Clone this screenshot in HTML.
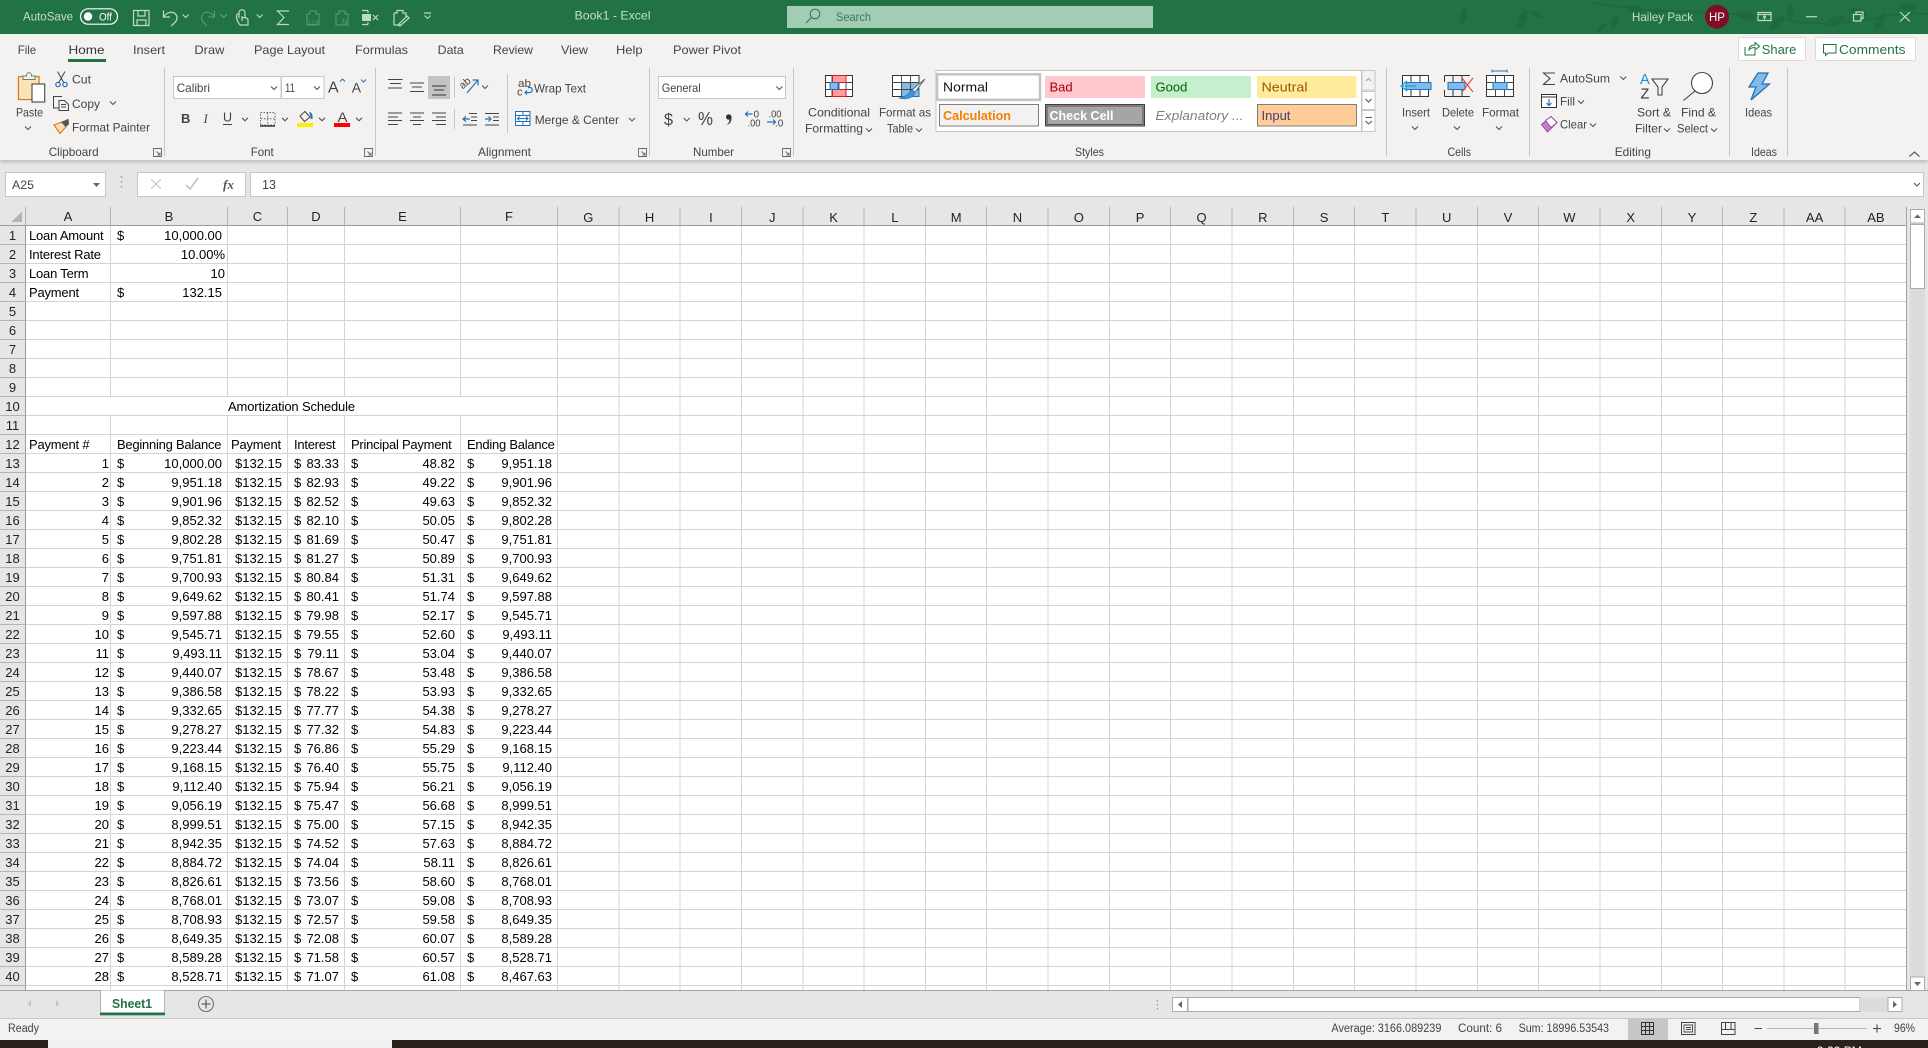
<!DOCTYPE html>
<html lang="en"><head><meta charset="utf-8"><title>Book1 - Excel</title>
<style>
html,body{margin:0;padding:0;width:1928px;height:1048px;overflow:hidden;background:#e6e6e6;font-family:"Liberation Sans",sans-serif}
.abs{position:absolute}
#grid{left:0;top:207px;width:1906px;height:783px;overflow:hidden;background:#fff}
#bgr{left:558px;top:0;width:1348px;height:783px;
background:repeating-linear-gradient(to right,transparent 0,transparent 60.32px,#d4d4d4 60.32px,#d4d4d4 61.32px),repeating-linear-gradient(to bottom,transparent 0,transparent 18px,#d4d4d4 18px,#d4d4d4 19px);background-position:0 0,0 0}
#hdr{left:558px;top:0;width:1348px;height:19px;box-sizing:border-box;background:repeating-linear-gradient(to right,#e6e6e6 0,#e6e6e6 60.32px,#b4b4b4 60.32px,#b4b4b4 61.32px);border-bottom:1px solid #9c9c9c}
table{position:absolute;left:0;top:0;border-collapse:separate;border-spacing:0;table-layout:fixed;width:558px;font-size:13px;color:#000}
th,td{box-sizing:border-box;height:19px;padding:2px 0 0 0;border-right:1px solid #d4d4d4;border-bottom:1px solid #d4d4d4;line-height:16px;white-space:nowrap;overflow:hidden;font-weight:normal}
thead th{background:#e6e6e6;border-right:1px solid #b4b4b4;border-bottom:1px solid #9c9c9c;color:#222;text-align:center}
tbody th{background:#e6e6e6;border-right:1px solid #9c9c9c;border-bottom:1px solid #b4b4b4;text-align:center;color:#222}
td.a{padding:2px 5px 0 6px;text-align:right}
td.a i{float:left;font-style:normal}
td.n{text-align:right;padding-right:1px}
td.r{text-align:right;padding-right:2px}
td.c{text-align:right;padding-right:5px}
td.l{padding-left:3px;letter-spacing:-.2px}
td.h{padding-left:6px;letter-spacing:-.25px}
td.m{text-align:center;letter-spacing:-.15px}
#ov{position:absolute;left:0;top:0}
#ov text{font-family:"Liberation Sans",sans-serif;font-size:12px;fill:#444}
#ov .tb{fill:#c6dccf}
#ov .nm{font-size:13px}
.ic{fill:none;stroke:#444;stroke-width:1}
.w{fill:none;stroke:#c0d8ca;stroke-width:1.2}
.d{fill:none;stroke:#5c9a78;stroke-width:1}
.bl{fill:none;stroke:#1e73be;stroke-width:1.2}
</style></head><body>
<div class="abs" style="left:0;top:0;width:1928px;height:34px;background:#217346"></div>
<div class="abs" style="left:787px;top:6px;width:366px;height:22px;background:#a2cdb4"></div>
<div class="abs" style="left:0;top:34px;width:1928px;height:126px;background:#f3f2f1;box-shadow:0 2px 3px rgba(0,0,0,.18)"></div>
<div class="abs" style="left:5px;top:172px;width:101px;height:25px;box-sizing:border-box;background:#fff;border:1px solid #c6c6c6"></div>
<div class="abs" style="left:137px;top:172px;width:109px;height:25px;box-sizing:border-box;background:#fff;border:1px solid #c6c6c6"></div>
<div class="abs" style="left:250px;top:172px;width:1674px;height:25px;box-sizing:border-box;background:#fff;border:1px solid #c6c6c6"></div>

<div class="abs" id="grid">
<div class="abs" id="bgr"></div><div class="abs" id="hdr"></div>
<table>
<colgroup><col style="width:26px"><col style="width:85px"><col style="width:117px"><col style="width:60px"><col style="width:57px"><col style="width:116px"><col style="width:97px"></colgroup>
<thead><tr><th></th><th>A</th><th>B</th><th>C</th><th>D</th><th>E</th><th>F</th></tr></thead>
<tbody>
<tr><th>1</th><td class="l">Loan Amount</td><td class="a"><i>$</i>10,000.00</td><td></td><td></td><td></td><td></td></tr>
<tr><th>2</th><td class="l">Interest Rate</td><td class="r">10.00%</td><td></td><td></td><td></td><td></td></tr>
<tr><th>3</th><td class="l">Loan Term</td><td class="r">10</td><td></td><td></td><td></td><td></td></tr>
<tr><th>4</th><td class="l">Payment</td><td class="a"><i>$</i>132.15</td><td></td><td></td><td></td><td></td></tr>
<tr><th>5</th><td></td><td></td><td></td><td></td><td></td><td></td></tr>
<tr><th>6</th><td></td><td></td><td></td><td></td><td></td><td></td></tr>
<tr><th>7</th><td></td><td></td><td></td><td></td><td></td><td></td></tr>
<tr><th>8</th><td></td><td></td><td></td><td></td><td></td><td></td></tr>
<tr><th>9</th><td></td><td></td><td></td><td></td><td></td><td></td></tr>
<tr><th>10</th><td class="m" colspan="6">Amortization Schedule</td></tr>
<tr><th>11</th><td></td><td></td><td></td><td></td><td></td><td></td></tr>
<tr><th>12</th><td class="l">Payment #</td><td class="h">Beginning Balance</td><td class="l">Payment</td><td class="h">Interest</td><td class="h">Principal Payment</td><td class="h">Ending Balance</td></tr>
<tr><th>13</th><td class="n">1</td><td class="a"><i>$</i>10,000.00</td><td class="c">$132.15</td><td class="a"><i>$</i>83.33</td><td class="a"><i>$</i>48.82</td><td class="a"><i>$</i>9,951.18</td></tr>
<tr><th>14</th><td class="n">2</td><td class="a"><i>$</i>9,951.18</td><td class="c">$132.15</td><td class="a"><i>$</i>82.93</td><td class="a"><i>$</i>49.22</td><td class="a"><i>$</i>9,901.96</td></tr>
<tr><th>15</th><td class="n">3</td><td class="a"><i>$</i>9,901.96</td><td class="c">$132.15</td><td class="a"><i>$</i>82.52</td><td class="a"><i>$</i>49.63</td><td class="a"><i>$</i>9,852.32</td></tr>
<tr><th>16</th><td class="n">4</td><td class="a"><i>$</i>9,852.32</td><td class="c">$132.15</td><td class="a"><i>$</i>82.10</td><td class="a"><i>$</i>50.05</td><td class="a"><i>$</i>9,802.28</td></tr>
<tr><th>17</th><td class="n">5</td><td class="a"><i>$</i>9,802.28</td><td class="c">$132.15</td><td class="a"><i>$</i>81.69</td><td class="a"><i>$</i>50.47</td><td class="a"><i>$</i>9,751.81</td></tr>
<tr><th>18</th><td class="n">6</td><td class="a"><i>$</i>9,751.81</td><td class="c">$132.15</td><td class="a"><i>$</i>81.27</td><td class="a"><i>$</i>50.89</td><td class="a"><i>$</i>9,700.93</td></tr>
<tr><th>19</th><td class="n">7</td><td class="a"><i>$</i>9,700.93</td><td class="c">$132.15</td><td class="a"><i>$</i>80.84</td><td class="a"><i>$</i>51.31</td><td class="a"><i>$</i>9,649.62</td></tr>
<tr><th>20</th><td class="n">8</td><td class="a"><i>$</i>9,649.62</td><td class="c">$132.15</td><td class="a"><i>$</i>80.41</td><td class="a"><i>$</i>51.74</td><td class="a"><i>$</i>9,597.88</td></tr>
<tr><th>21</th><td class="n">9</td><td class="a"><i>$</i>9,597.88</td><td class="c">$132.15</td><td class="a"><i>$</i>79.98</td><td class="a"><i>$</i>52.17</td><td class="a"><i>$</i>9,545.71</td></tr>
<tr><th>22</th><td class="n">10</td><td class="a"><i>$</i>9,545.71</td><td class="c">$132.15</td><td class="a"><i>$</i>79.55</td><td class="a"><i>$</i>52.60</td><td class="a"><i>$</i>9,493.11</td></tr>
<tr><th>23</th><td class="n">11</td><td class="a"><i>$</i>9,493.11</td><td class="c">$132.15</td><td class="a"><i>$</i>79.11</td><td class="a"><i>$</i>53.04</td><td class="a"><i>$</i>9,440.07</td></tr>
<tr><th>24</th><td class="n">12</td><td class="a"><i>$</i>9,440.07</td><td class="c">$132.15</td><td class="a"><i>$</i>78.67</td><td class="a"><i>$</i>53.48</td><td class="a"><i>$</i>9,386.58</td></tr>
<tr><th>25</th><td class="n">13</td><td class="a"><i>$</i>9,386.58</td><td class="c">$132.15</td><td class="a"><i>$</i>78.22</td><td class="a"><i>$</i>53.93</td><td class="a"><i>$</i>9,332.65</td></tr>
<tr><th>26</th><td class="n">14</td><td class="a"><i>$</i>9,332.65</td><td class="c">$132.15</td><td class="a"><i>$</i>77.77</td><td class="a"><i>$</i>54.38</td><td class="a"><i>$</i>9,278.27</td></tr>
<tr><th>27</th><td class="n">15</td><td class="a"><i>$</i>9,278.27</td><td class="c">$132.15</td><td class="a"><i>$</i>77.32</td><td class="a"><i>$</i>54.83</td><td class="a"><i>$</i>9,223.44</td></tr>
<tr><th>28</th><td class="n">16</td><td class="a"><i>$</i>9,223.44</td><td class="c">$132.15</td><td class="a"><i>$</i>76.86</td><td class="a"><i>$</i>55.29</td><td class="a"><i>$</i>9,168.15</td></tr>
<tr><th>29</th><td class="n">17</td><td class="a"><i>$</i>9,168.15</td><td class="c">$132.15</td><td class="a"><i>$</i>76.40</td><td class="a"><i>$</i>55.75</td><td class="a"><i>$</i>9,112.40</td></tr>
<tr><th>30</th><td class="n">18</td><td class="a"><i>$</i>9,112.40</td><td class="c">$132.15</td><td class="a"><i>$</i>75.94</td><td class="a"><i>$</i>56.21</td><td class="a"><i>$</i>9,056.19</td></tr>
<tr><th>31</th><td class="n">19</td><td class="a"><i>$</i>9,056.19</td><td class="c">$132.15</td><td class="a"><i>$</i>75.47</td><td class="a"><i>$</i>56.68</td><td class="a"><i>$</i>8,999.51</td></tr>
<tr><th>32</th><td class="n">20</td><td class="a"><i>$</i>8,999.51</td><td class="c">$132.15</td><td class="a"><i>$</i>75.00</td><td class="a"><i>$</i>57.15</td><td class="a"><i>$</i>8,942.35</td></tr>
<tr><th>33</th><td class="n">21</td><td class="a"><i>$</i>8,942.35</td><td class="c">$132.15</td><td class="a"><i>$</i>74.52</td><td class="a"><i>$</i>57.63</td><td class="a"><i>$</i>8,884.72</td></tr>
<tr><th>34</th><td class="n">22</td><td class="a"><i>$</i>8,884.72</td><td class="c">$132.15</td><td class="a"><i>$</i>74.04</td><td class="a"><i>$</i>58.11</td><td class="a"><i>$</i>8,826.61</td></tr>
<tr><th>35</th><td class="n">23</td><td class="a"><i>$</i>8,826.61</td><td class="c">$132.15</td><td class="a"><i>$</i>73.56</td><td class="a"><i>$</i>58.60</td><td class="a"><i>$</i>8,768.01</td></tr>
<tr><th>36</th><td class="n">24</td><td class="a"><i>$</i>8,768.01</td><td class="c">$132.15</td><td class="a"><i>$</i>73.07</td><td class="a"><i>$</i>59.08</td><td class="a"><i>$</i>8,708.93</td></tr>
<tr><th>37</th><td class="n">25</td><td class="a"><i>$</i>8,708.93</td><td class="c">$132.15</td><td class="a"><i>$</i>72.57</td><td class="a"><i>$</i>59.58</td><td class="a"><i>$</i>8,649.35</td></tr>
<tr><th>38</th><td class="n">26</td><td class="a"><i>$</i>8,649.35</td><td class="c">$132.15</td><td class="a"><i>$</i>72.08</td><td class="a"><i>$</i>60.07</td><td class="a"><i>$</i>8,589.28</td></tr>
<tr><th>39</th><td class="n">27</td><td class="a"><i>$</i>8,589.28</td><td class="c">$132.15</td><td class="a"><i>$</i>71.58</td><td class="a"><i>$</i>60.57</td><td class="a"><i>$</i>8,528.71</td></tr>
<tr><th>40</th><td class="n">28</td><td class="a"><i>$</i>8,528.71</td><td class="c">$132.15</td><td class="a"><i>$</i>71.07</td><td class="a"><i>$</i>61.08</td><td class="a"><i>$</i>8,467.63</td></tr>
<tr><th>41</th><td class="n">29</td><td class="a"><i>$</i>8,467.63</td><td class="c">$132.15</td><td class="a"><i>$</i>70.56</td><td class="a"><i>$</i>61.59</td><td class="a"><i>$</i>8,406.04</td></tr>
</tbody></table>
</div>
<div class="abs" style="left:0;top:990px;width:1928px;height:1px;background:#a4a4a4"></div>
<div class="abs" style="left:1906px;top:207px;width:1px;height:783px;background:#a4a4a4"></div>
<div class="abs" style="left:1910px;top:209px;width:15px;height:781px;background:#dcdcdc"></div>
<div class="abs" style="left:0;top:1018px;width:1928px;height:22px;background:#f3f2f1;border-top:1px solid #c8c6c4;box-sizing:border-box"></div>
<div class="abs" style="left:0;top:1040px;width:1928px;height:8px;background:#2b211b;overflow:hidden">
<div class="abs" style="left:48px;top:0;width:344px;height:8px;background:#f1f1f1"></div>
<div class="abs" style="left:1817px;top:4px;color:#fff;font-size:12px;line-height:14px">9:22 PM</div>
</div>

<svg id="ov" width="1928" height="1048" viewBox="0 0 1928 1048" xmlns="http://www.w3.org/2000/svg">
<defs>
<path id="cv" d="M-3 -1.5 L0 1.5 L3 -1.5" fill="none" stroke="#555" stroke-width="1.1"/>
<path id="cw" d="M-3 -1.5 L0 1.5 L3 -1.5" fill="none" stroke="#c0d8ca" stroke-width="1.1"/>
<path id="lc" d="M0 0 H8 V8 H0 Z M3 3 L6.5 6.5 M6.5 4 V6.5 H4" fill="none" stroke="#666" stroke-width=".9"/>
<path id="lf" d="M0 0 C6 -7 14 -7 20 -3 C14 3 6 4 0 0Z" fill="#1d6a3f"/>
</defs>

<!-- decorative leaves -->
<g>
<use href="#lf" transform="translate(1462,24) rotate(-70) scale(.9)"/>
<use href="#lf" transform="translate(1518,28) rotate(-55)"/>
<use href="#lf" transform="translate(1530,12) rotate(30) scale(.7)"/>
<use href="#lf" transform="translate(1596,32) rotate(-30) scale(.7)"/>
<use href="#lf" transform="translate(1612,30) rotate(-60) scale(.8)"/>
<use href="#lf" transform="translate(1625,6) rotate(25)"/>
<use href="#lf" transform="translate(1648,22) rotate(-40)"/>
<use href="#lf" transform="translate(1735,14) rotate(20)"/>
<use href="#lf" transform="translate(1770,30) rotate(-35)"/>
<use href="#lf" transform="translate(1790,20) rotate(-80) scale(.8)"/>
<use href="#lf" transform="translate(1825,26) rotate(-15) scale(1.1)"/>
<use href="#lf" transform="translate(1850,8) rotate(35)"/>
<use href="#lf" transform="translate(1875,30) rotate(-50)"/>
<use href="#lf" transform="translate(1898,6) rotate(15)"/>
<path d="M1590 2 C1650 16 1730 8 1800 22 C1850 30 1890 10 1928 14" fill="none" stroke="#1d6a3f" stroke-width="1.5"/>
</g>

<!-- title bar -->
<text class="tb" x="23" y="20.5" textLength="50" lengthAdjust="spacingAndGlyphs">AutoSave</text>
<rect x="80.5" y="8.8" width="37" height="15.4" rx="7.7" fill="none" stroke="#fff" stroke-width="1.2"/>
<circle cx="88" cy="16.5" r="4.2" fill="#fff"/>
<text x="99" y="20.5" textLength="13" lengthAdjust="spacingAndGlyphs" style="font-size:11px;fill:#fff">Off</text>
<path class="w" d="M133.5 10.5 H149 V25.5 H133.5Z M138 10.5 V16 H145 V10.5 M137 25.5 V20 H146 V25.5"/>
<path class="w" d="M163.5 10.5 V17 H170 M163.5 17 C168 10 177 11 177 18 C177 21 174 23.5 171 26"/>
<use href="#cw" x="185.7" y="16"/>
<path class="d" d="M214.5 10.5 V17 H208 M214.5 17 C210 10 201.5 11 201.5 18 C201.5 21 204.5 23.5 207 26"/>
<use href="#cw" x="223.7" y="16" opacity=".45"/>
<path class="w" d="M239 18 V12.5 C239 9 245 9 245 12.5 V18 M242 16 V21 M239 14 C235 13 236 20 240 25 H248 V20 C248 18 245 17.5 242 17.5"/>
<use href="#cw" x="259.7" y="16"/>
<path class="w" d="M289 11 H277.5 L284 17.5 L277.5 24.5 H289"/>
<path class="d" d="M307 14 H310 V11 H316 V14 H319 V25 H307Z"/>
<text x="307.5" y="24.5" style="font-size:6.5px;fill:#5c9a78">123</text>
<path class="d" d="M336 14 H339 V11 H345 V14 H348 V25 H336Z"/>
<text x="342" y="24.5" style="font-size:8px;font-style:italic;fill:#5c9a78">fx</text>
<path class="w" d="M362 10.5 H368 M362 24.5 H368 M368 10.5 V13 M368 22 V24.5"/><rect x="362" y="14" width="9" height="7" fill="#c0d8ca"/>
<path class="w" d="M373 15 L378 20 M378 15 L373 20"/>
<path class="w" d="M394 13 H397 V10.5 H403 V13 H406 V18 M401 25 H394 V13 M398 25 L407 16 L409 18 L400 26Z"/>
<path class="w" d="M424 13 H431"/><use href="#cw" x="427.5" y="17"/>
<text class="tb" x="574.5" y="19.5" textLength="76" lengthAdjust="spacingAndGlyphs">Book1  -  Excel</text>
<circle cx="815" cy="14" r="4.8" fill="none" stroke="#2f7d58" stroke-width="1.1"/><path d="M811.5 17.5 L806 23" stroke="#2f7d58" stroke-width="1.2"/>
<text x="836" y="21" textLength="35" lengthAdjust="spacingAndGlyphs" style="fill:#2f7d58">Search</text>
<text class="tb" x="1632" y="21" textLength="61" lengthAdjust="spacingAndGlyphs">Hailey Pack</text>
<circle cx="1717" cy="16.7" r="12" fill="#7f0d26"/>
<text x="1717" y="21" text-anchor="middle" style="font-size:11.5px;fill:#fff">HP</text>
<path class="w" d="M1758 12.5 H1771 V20.5 H1758Z M1758 14.5 H1771 M1764.5 19.5 V16 M1762.8 17.5 L1764.5 15.8 L1766.2 17.5"/>
<path class="w" d="M1806 16.7 H1817"/>
<path class="w" d="M1853.5 14.5 H1861 V21 H1853.5Z M1856 14.5 V12 H1863 V18.5 H1861"/>
<path class="w" d="M1900 12 L1910 21.5 M1910 12 L1900 21.5"/>

<!-- tabs -->
<text x="17.7" y="54" textLength="18.5" lengthAdjust="spacingAndGlyphs">File</text>
<text x="68.5" y="54" textLength="36" lengthAdjust="spacingAndGlyphs" style="fill:#333">Home</text>
<rect x="68" y="59" width="38" height="3" fill="#217346"/>
<text x="133" y="54" textLength="32" lengthAdjust="spacingAndGlyphs">Insert</text>
<text x="194.4" y="54" textLength="30" lengthAdjust="spacingAndGlyphs">Draw</text>
<text x="254" y="54" textLength="71" lengthAdjust="spacingAndGlyphs">Page Layout</text>
<text x="355" y="54" textLength="53" lengthAdjust="spacingAndGlyphs">Formulas</text>
<text x="437.7" y="54" textLength="26" lengthAdjust="spacingAndGlyphs">Data</text>
<text x="493" y="54" textLength="40" lengthAdjust="spacingAndGlyphs">Review</text>
<text x="561" y="54" textLength="27" lengthAdjust="spacingAndGlyphs">View</text>
<text x="616" y="54" textLength="26.5" lengthAdjust="spacingAndGlyphs">Help</text>
<text x="673" y="54" textLength="68" lengthAdjust="spacingAndGlyphs">Power Pivot</text>

<g fill="#fff" stroke="#dcdad8">
<rect x="1738.5" y="37.5" width="67" height="23" rx="2"/>
<rect x="1815.5" y="37.5" width="100" height="23" rx="2"/>
</g>
<path d="M1745 47 V55 H1755 V51 M1749 50 C1749 46 1752 45 1755 45 V42.5 L1759.5 46.5 L1755 50 V47.5 C1752 47.5 1750 48.5 1749 50Z" fill="none" stroke="#217346" stroke-width="1"/>
<text x="1761.8" y="54" textLength="34.5" lengthAdjust="spacingAndGlyphs" style="font-size:13px;fill:#217346">Share</text>
<path d="M1823.5 44.5 H1836 V53 H1828 L1825.5 55.5 V53 H1823.5Z" fill="none" stroke="#217346" stroke-width="1"/>
<text x="1839" y="54" textLength="66.5" lengthAdjust="spacingAndGlyphs" style="font-size:13px;fill:#217346">Comments</text>

<!-- separators -->
<g stroke="#c8c6c4" stroke-width="1">
<path d="M164.5 68 V156 M375.5 68 V156 M649.5 68 V156 M793.5 68 V156 M1386.5 68 V156 M1529.5 68 V156 M1729.5 68 V156 M1787.5 68 V156"/>
<path d="M454.5 77 V98 M454.5 109 V129 M507.5 74 V133"/>
</g>
<!-- group labels -->
<text x="48.7" y="156" textLength="50" lengthAdjust="spacingAndGlyphs">Clipboard</text>
<text x="250.7" y="156" textLength="23" lengthAdjust="spacingAndGlyphs">Font</text>
<text x="478" y="156" textLength="53" lengthAdjust="spacingAndGlyphs">Alignment</text>
<text x="693" y="156" textLength="41" lengthAdjust="spacingAndGlyphs">Number</text>
<text x="1075" y="156" textLength="29" lengthAdjust="spacingAndGlyphs">Styles</text>
<text x="1447.5" y="156" textLength="23.5" lengthAdjust="spacingAndGlyphs">Cells</text>
<text x="1614.7" y="156" textLength="36.3" lengthAdjust="spacingAndGlyphs">Editing</text>
<text x="1751" y="156" textLength="26" lengthAdjust="spacingAndGlyphs">Ideas</text>
<use href="#lc" x="153.5" y="148.5"/><use href="#lc" x="364.5" y="148.5"/><use href="#lc" x="638.5" y="148.5"/><use href="#lc" x="782.5" y="148.5"/>
<path d="M1909.5 156.5 L1914.5 152 L1919.5 156.5" fill="none" stroke="#444" stroke-width="1.1"/>

<!-- clipboard -->
<path d="M18.5 76.5 H39 V84 M18.5 76.5 V99.5 H32" fill="#fde9c8" stroke="#d97a10" stroke-width="1.3"/>
<rect x="20.5" y="78" width="17" height="19" fill="#fbe3b8"/>
<path d="M23 79.5 V76 H26.5 C26.5 71.5 31.5 71.5 31.5 76 H35 V79.5Z" fill="#f3f2f1" stroke="#777" stroke-width="1"/>
<rect x="32" y="84" width="12.7" height="18" fill="#fff" stroke="#444" stroke-width="1.1"/>
<text x="16" y="116.7" textLength="27" lengthAdjust="spacingAndGlyphs">Paste</text>
<use href="#cv" x="28" y="128"/>
<path d="M57.5 71.5 L64 83 M65 71.5 L58.5 83" class="ic"/><circle cx="58" cy="84.5" r="2.2" class="bl"/><circle cx="65" cy="84.5" r="2.2" class="bl"/>
<text x="72" y="83.5" textLength="19" lengthAdjust="spacingAndGlyphs">Cut</text>
<path class="ic" d="M62 96.5 H53.5 V108 H59 M59 100.5 H64.5 L68.5 104.5 V110.5 H59Z M61 104.5 H66 M61 107 H66"/>
<text x="72" y="108" textLength="28" lengthAdjust="spacingAndGlyphs">Copy</text>
<use href="#cv" x="113" y="103"/>
<path d="M54 125 L62 122 L66 127 L60 133.5 Z" fill="#fbdcb4" stroke="#d97a10" stroke-width="1.1"/>
<path d="M61.5 122.5 L68 119.5 L68.5 124 L65.5 126.5" fill="#555" stroke="#555"/>
<text x="72" y="131.7" textLength="78" lengthAdjust="spacingAndGlyphs">Format Painter</text>

<!-- font -->
<rect x="173.5" y="76.5" width="107.5" height="22" fill="#fff" stroke="#c8c6c4"/>
<rect x="281.5" y="76.5" width="42.5" height="22" fill="#fff" stroke="#c8c6c4"/>
<text x="176.7" y="92" textLength="33.3" lengthAdjust="spacingAndGlyphs">Calibri</text>
<use href="#cv" x="274" y="88"/>
<text x="285" y="92" textLength="10" lengthAdjust="spacingAndGlyphs">11</text>
<use href="#cv" x="317" y="88"/>
<text x="328" y="92.5" style="font-size:16px">A</text>
<path d="M340 81.5 L342.5 79 L345 81.5" fill="none" stroke="#1e73be" stroke-width="1"/>
<text x="351.7" y="92.5" style="font-size:14px">A</text>
<path d="M361 79.5 L363.5 82 L366 79.5" fill="none" stroke="#1e73be" stroke-width="1"/>
<text x="181" y="123" style="font-weight:bold;font-size:13px">B</text>
<text x="203.5" y="123" style="font-style:italic;font-size:13px;font-family:'Liberation Serif',serif">I</text>
<text x="223" y="121.5" style="font-size:12.5px">U</text><path d="M223 124.5 H232" stroke="#444"/>
<use href="#cv" x="245" y="119.3"/>
<path d="M260.5 112.5 H275 V125 H260.5Z" fill="none" stroke="#666" stroke-dasharray="1.5 1.5"/>
<path d="M267.7 113 V125 M261 118.7 H275" stroke="#666" stroke-dasharray="1.5 1.5"/>
<path d="M260 126 H275" stroke="#111" stroke-width="1.2"/>
<use href="#cv" x="285" y="119.3"/>
<path d="M300 116 L305 111.5 L310 117 L304.5 121.5 Z" fill="none" stroke="#444"/>
<path d="M309.5 113 C311 113 312 116 311.5 119" stroke="#1e73be" stroke-width="2" fill="none"/>
<rect x="297" y="123" width="16" height="4" fill="#ffee00"/>
<use href="#cv" x="322" y="119.3"/>
<text x="337.5" y="122" textLength="10" lengthAdjust="spacingAndGlyphs" style="font-size:14px">A</text>
<rect x="334" y="123" width="16" height="4" fill="#f00"/>
<use href="#cv" x="359" y="119.3"/>

<!-- alignment -->
<rect x="428" y="76" width="22" height="23" fill="#c4c3c2"/>
<g stroke="#444" stroke-width="1.1" fill="none">
<path d="M388 79.5 H402.5 M390 83.5 H401 M388 88 H402"/>
<path d="M410 83 H424 M412 87 H422 M410 91.5 H424"/>
<path d="M432 86 H446 M434 90 H444 M432 95 H446" stroke="#333"/>
<path d="M388 113 H402 M388 117 H398 M388 120.5 H402 M388 124.5 H398"/>
<path d="M410 113 H424 M413 117 H421 M410 120.5 H424 M413 124.5 H421"/>
<path d="M432 113 H446 M436 117 H446 M432 120.5 H446 M436 124.5 H446"/>
<path d="M469 113.5 H477 M471 117 H477 M471 120.5 H477 M463 125 H477"/>
<path d="M485 113.5 H499 M493 117 H499 M493 120.5 H499 M485 125 H499"/>
</g>
<path d="M463 119 H470 M466 116.5 L463 119 L466 121.5 M485 119 H491 M488.5 116.5 L491 119 L488.5 121.5" class="bl"/>
<path d="M467 93 L478 80 M472.5 80 H478 V85.5" class="bl"/>
<text x="461" y="85" transform="rotate(-40 468 85)" style="font-size:10.5px">ab</text>
<use href="#cv" x="485" y="87"/>
<text x="518" y="87" style="font-size:11px" textLength="13" lengthAdjust="spacingAndGlyphs">ab</text><text x="517" y="95.5" style="font-size:11px">c</text>
<path d="M525 92.5 H530 C533 92.5 533 87.5 530 87.5 H528 M527 90.5 L525 92.5 L527 94.5" class="bl"/>
<text x="534" y="92.3" textLength="52" lengthAdjust="spacingAndGlyphs">Wrap Text</text>
<path d="M515.5 111.5 H530 V125.5 H515.5Z" fill="#fff" stroke="#1e73be" stroke-width="1"/>
<path d="M515.5 115.5 H530 M515.5 121.5 H530 M523 111.5 V115.5 M523 121.5 V125.5" stroke="#1e73be"/>
<path d="M517.5 118.5 H528 M519.5 116.5 L517.5 118.5 L519.5 120.5 M526 116.5 L528 118.5 L526 120.5" stroke="#1e73be" fill="none"/>
<text x="534.7" y="124" textLength="84.3" lengthAdjust="spacingAndGlyphs">Merge &amp; Center</text>
<use href="#cv" x="632" y="119.5"/>

<!-- number -->
<rect x="658.5" y="76.5" width="127" height="22" fill="#fff" stroke="#c8c6c4"/>
<text x="661.7" y="92" textLength="39" lengthAdjust="spacingAndGlyphs">General</text>
<use href="#cv" x="779.3" y="88"/>
<text x="664" y="125" style="font-size:17px" textLength="9" lengthAdjust="spacingAndGlyphs">$</text>
<use href="#cv" x="686.7" y="119.5"/>
<text x="698" y="125" style="font-size:18px" textLength="15" lengthAdjust="spacingAndGlyphs">%</text>
<path d="M731.5 117 C731.5 113.5 726 113.500 726 117 C726 119.5 728.500 120 729.500 119.500 C729.500 122 728 124 726.500 125 C730 124.500 732 120.500 731.5 117Z" fill="#333"/>
<text x="753.500" y="117.500" style="font-size:10px">0</text><text x="747.500" y="126.500" style="font-size:10px" textLength="13" lengthAdjust="spacingAndGlyphs">.00</text>
<path d="M745.5 114 H752.5 M748 111.5 L745.5 114 L748 116.5" class="bl"/>
<text x="768.500" y="117.500" style="font-size:10px" textLength="13" lengthAdjust="spacingAndGlyphs">.00</text><text x="775" y="126.500" style="font-size:10px">.0</text>
<path d="M767 122 H775.500 M773 119.500 L775.500 122 L773 124.500" class="bl"/>

<!-- conditional formatting -->
<rect x="825.5" y="75.5" width="27" height="21" fill="#fff" stroke="#333"/>
<path d="M825.5 82.5 H852.5 M825.5 89.5 H852.5 M832 75.5 V96.5 M839 75.5 V96.5 M846 75.5 V96.5" fill="none" stroke="#444" stroke-width=".9"/>
<rect x="832.5" y="75.5" width="13.5" height="7" fill="#ff9ca3" stroke="#d81f26"/>
<rect x="832.5" y="89.5" width="13.5" height="7" fill="#ff9ca3" stroke="#d81f26"/>
<rect x="830" y="82.5" width="8" height="7" fill="#82bbe8" stroke="#1e73be"/>
<text x="808" y="116.7" textLength="62" lengthAdjust="spacingAndGlyphs">Conditional</text>
<text x="805" y="132.7" textLength="58" lengthAdjust="spacingAndGlyphs">Formatting</text>
<use href="#cv" x="869" y="130"/>
<rect x="892.5" y="75.5" width="26.5" height="21" fill="#fff" stroke="#333"/>
<rect x="901.5" y="82.5" width="17.5" height="14" fill="#82bbe8" stroke="#1e73be"/>
<path d="M892.5 82.5 H919 M892.5 89.5 H919 M901.5 75.5 V96.5 M910.5 75.5 V96.5" stroke="#444" fill="none" stroke-width=".9"/>
<path d="M925 79 L915 92 L912 90 Z" fill="#fff" stroke="#666"/>
<path d="M912 90 C908 91 910 96 899 98 C904 100 914 99 915 92Z" fill="#4a90d0" stroke="#1e73be" stroke-width=".6"/>
<text x="879" y="116.7" textLength="52" lengthAdjust="spacingAndGlyphs">Format as</text>
<text x="887" y="132.7" textLength="26" lengthAdjust="spacingAndGlyphs">Table</text>
<use href="#cv" x="919" y="130"/>

<!-- styles -->
<rect x="936" y="70.5" width="425.5" height="61" fill="#fff" stroke="#c8c6c4"/>
<rect x="937" y="74.3" width="103" height="25.5" fill="#fff" stroke="#c4c3c2" stroke-width="2.5"/>
<text x="943" y="91.5" class="nm" style="fill:#111" textLength="45" lengthAdjust="spacingAndGlyphs">Normal</text>
<rect x="1045" y="76" width="100" height="22" fill="#ffc7ce"/><text x="1049.5" y="91.5" class="nm" style="fill:#9c0006">Bad</text>
<rect x="1151" y="76" width="100" height="22" fill="#c6efce"/><text x="1155.5" y="91.5" class="nm" style="fill:#006100">Good</text>
<rect x="1257" y="76" width="99.5" height="22" fill="#ffeb9c"/><text x="1261.5" y="91.5" class="nm" style="fill:#9c5700" textLength="46" lengthAdjust="spacingAndGlyphs">Neutral</text>
<rect x="939.5" y="104.5" width="99" height="21.5" fill="#f2f2f2" stroke="#7f7f7f"/><text x="943" y="120" class="nm" style="fill:#fa7d00;font-weight:bold" textLength="68" lengthAdjust="spacingAndGlyphs">Calculation</text>
<rect x="1045.5" y="104.5" width="99" height="21.5" fill="#a5a5a5" stroke="#3f3f3f"/><rect x="1047" y="106" width="96" height="18.5" fill="none" stroke="#3f3f3f" stroke-width=".8"/><text x="1049.5" y="120" class="nm" style="fill:#fff;font-weight:bold" textLength="64" lengthAdjust="spacingAndGlyphs">Check Cell</text>
<text x="1155.5" y="120" class="nm" style="fill:#7f7f7f;font-style:italic" textLength="88" lengthAdjust="spacingAndGlyphs">Explanatory ...</text>
<rect x="1257.5" y="104.5" width="99" height="21.5" fill="#ffcc99" stroke="#7f7f7f"/><text x="1261.5" y="120" class="nm" style="fill:#3f3f76">Input</text>
<g stroke="#c8c6c4" fill="#fff"><rect x="1362" y="70.5" width="13" height="19.5" fill="#f3f2f1"/><rect x="1362" y="91.5" width="13" height="18"/><rect x="1362" y="110.5" width="13" height="21"/></g>
<path d="M1366 81 L1368.5 78.5 L1371 81" fill="none" stroke="#a0a0a0"/>
<use href="#cv" x="1368.5" y="100.5"/>
<path d="M1365.5 117.5 H1372 M1365.5 121 L1368.7 124 L1372 121" fill="none" stroke="#555"/>

<!-- cells -->
<path d="M1402.5 75.5 H1428.5 V96.5 H1402.5Z M1402.5 82.5 V89.5 M1411 75.5 V96.5 M1420 75.5 V96.5" fill="#fff" stroke="#333"/>
<rect x="1406" y="82.5" width="25" height="7" fill="#82bbe8" stroke="#1e73be"/>
<path d="M1407 81 L1401 86 L1407 91 M1401 86 H1416" fill="none" stroke="#1e9be0" stroke-width="1.2"/>
<path d="M1444.5 75.5 H1470 M1444.5 96.5 H1470 M1444.5 75.5 V82 M1444.5 90 V96.5 M1453 75.5 V82 M1453 90 V96.5 M1462 75.5 V82 M1462 90 V96.5" fill="none" stroke="#333"/>
<rect x="1448" y="82.5" width="17" height="7" fill="#82bbe8" stroke="#1e73be"/>
<path d="M1462 78 L1473 92 M1473 78 L1462 92" stroke="#e8433c" stroke-width="1.1"/>
<path d="M1492 71 H1507 M1492 69.5 V72.5 M1507 69.5 V72.5" stroke="#1e73be" fill="none"/>
<rect x="1486.5" y="75.5" width="27" height="21" fill="#fff" stroke="#333"/>
<path d="M1486.5 82.5 H1513.5 M1486.5 89.5 H1513.5 M1495.5 75.5 V96.5 M1504.5 75.5 V96.5" stroke="#444"/>
<rect x="1493" y="82.5" width="14" height="7" fill="#82bbe8" stroke="#1e73be"/>
<text x="1402" y="116.7" textLength="28" lengthAdjust="spacingAndGlyphs">Insert</text>
<text x="1442" y="116.7" textLength="32" lengthAdjust="spacingAndGlyphs">Delete</text>
<text x="1482" y="116.7" textLength="37" lengthAdjust="spacingAndGlyphs">Format</text>
<use href="#cv" x="1415" y="128"/><use href="#cv" x="1457" y="128"/><use href="#cv" x="1499" y="128"/>

<!-- editing -->
<path d="M1555 73 H1543.5 L1550 78.5 L1543.5 84.5 H1555" fill="none" stroke="#444" stroke-width="1.1"/>
<text x="1560" y="82.7" textLength="50" lengthAdjust="spacingAndGlyphs">AutoSum</text>
<use href="#cv" x="1623.3" y="78"/>
<rect x="1541.5" y="94.5" width="15" height="13" fill="#fff" stroke="#333"/><path d="M1541.5 97 H1556.5" stroke="#333"/>
<path d="M1549 99 V105.5 M1546.5 103 L1549 105.5 L1551.5 103" class="bl"/>
<text x="1560" y="105.7" textLength="15" lengthAdjust="spacingAndGlyphs">Fill</text>
<use href="#cv" x="1581" y="102"/>
<path d="M1541.5 124.5 L1551 116.5 L1557 122.5 L1547.5 132Z" fill="#c77dcf" stroke="#9b4aa0"/>
<path d="M1545.5 120.5 L1551 116.5 L1557 122.5 L1551 127.5Z" fill="#fff" stroke="#9b4aa0"/>
<text x="1560" y="128.7" textLength="27" lengthAdjust="spacingAndGlyphs">Clear</text>
<use href="#cv" x="1593" y="125"/>
<text x="1640" y="84" style="font-size:14.500px;fill:#1e8ad6">A</text>
<text x="1640.500" y="98.500" style="font-size:14.500px;fill:#333">Z</text>
<path d="M1652 79 H1668 L1662 87 V95 H1658 V87Z" fill="none" stroke="#444" stroke-width="1.1"/>
<circle cx="1702" cy="83" r="10.5" fill="#fff" stroke="#444" stroke-width="1.1"/>
<path d="M1695 91 L1683.5 100.5" stroke="#444" stroke-width="1.1"/>
<text x="1637" y="116.7" textLength="34" lengthAdjust="spacingAndGlyphs">Sort &amp;</text>
<text x="1635" y="132.7" textLength="27" lengthAdjust="spacingAndGlyphs">Filter</text>
<use href="#cv" x="1667" y="130"/>
<text x="1681" y="116.7" textLength="35" lengthAdjust="spacingAndGlyphs">Find &amp;</text>
<text x="1677" y="132.7" textLength="31" lengthAdjust="spacingAndGlyphs">Select</text>
<use href="#cv" x="1714" y="130"/>
<path d="M1758 73 H1768 L1762 84 H1769.5 L1751 100 L1756 87 H1749Z" fill="#82bbe8" stroke="#1e73be" stroke-width="1.3"/>
<text x="1745" y="116.7" textLength="27" lengthAdjust="spacingAndGlyphs">Ideas</text>

<!-- formula bar -->
<text x="12" y="189" textLength="22" lengthAdjust="spacingAndGlyphs">A25</text>
<path d="M93 183 H100 L96.5 187Z" fill="#666"/>
<path d="M121.5 176 V177.5 M121.5 181 V182.5 M121.5 186 V187.5" stroke="#999" stroke-width="1.5"/>
<path d="M151 179 L161 189 M161 179 L151 189" stroke="#c8c8c8" stroke-width="1.2"/>
<path d="M186 185 L190 189 L198 178" fill="none" stroke="#c8c8c8" stroke-width="1.8"/>
<text x="223" y="189" style="font-family:'Liberation Serif',serif;font-style:italic;font-weight:bold;font-size:13px;fill:#555">fx</text>
<text x="262" y="189" style="font-size:12.5px">13</text>
<use href="#cv" x="1917" y="184.5"/>

<!-- column headers for G..AB -->
<g text-anchor="middle">
<text x="588.3" y="222" class="nm" style="fill:#222">G</text><text x="649.6" y="222" class="nm" style="fill:#222">H</text><text x="710.9" y="222" class="nm" style="fill:#222">I</text><text x="772.2" y="222" class="nm" style="fill:#222">J</text><text x="833.6" y="222" class="nm" style="fill:#222">K</text><text x="894.9" y="222" class="nm" style="fill:#222">L</text><text x="956.2" y="222" class="nm" style="fill:#222">M</text><text x="1017.5" y="222" class="nm" style="fill:#222">N</text><text x="1078.8" y="222" class="nm" style="fill:#222">O</text><text x="1140.1" y="222" class="nm" style="fill:#222">P</text><text x="1201.5" y="222" class="nm" style="fill:#222">Q</text><text x="1262.8" y="222" class="nm" style="fill:#222">R</text><text x="1324.1" y="222" class="nm" style="fill:#222">S</text><text x="1385.4" y="222" class="nm" style="fill:#222">T</text><text x="1446.7" y="222" class="nm" style="fill:#222">U</text><text x="1508" y="222" class="nm" style="fill:#222">V</text><text x="1569.4" y="222" class="nm" style="fill:#222">W</text><text x="1630.7" y="222" class="nm" style="fill:#222">X</text><text x="1692" y="222" class="nm" style="fill:#222">Y</text><text x="1753.3" y="222" class="nm" style="fill:#222">Z</text><text x="1814.6" y="222" class="nm" style="fill:#222">AA</text><text x="1875.9" y="222" class="nm" style="fill:#222">AB</text>
</g>
<path d="M22 211.5 V222 H11.5Z" fill="#b4b4b4"/>

<!-- vertical scrollbar -->
<rect x="1910.5" y="209.5" width="14" height="13.5" fill="#fff" stroke="#ababab"/>
<path d="M1914 218 H1921 L1917.5 214.5Z" fill="#666"/>
<rect x="1910.5" y="224.5" width="14" height="64" fill="#fff" stroke="#ababab"/>
<rect x="1910.5" y="977" width="14" height="13.5" fill="#fff" stroke="#ababab"/>
<path d="M1914 982 H1921 L1917.5 986Z" fill="#666"/>

<!-- sheet tabs -->
<path d="M100 990.5 H164.5 V1015 H100Z" fill="#fff"/>
<path d="M100.5 990 V1015 M164.5 990 V1015" stroke="#b4b4b4"/>
<rect x="100" y="1012.5" width="65" height="2.8" fill="#217346"/>
<text x="112" y="1008" textLength="40" lengthAdjust="spacingAndGlyphs" style="font-size:13px;font-weight:bold;fill:#217346">Sheet1</text>
<path d="M31 1000 L27.5 1003.5 L31 1007Z M56 1000 L59.5 1003.5 L56 1007Z" fill="#c4c4c4"/>
<circle cx="206" cy="1004" r="7.5" fill="none" stroke="#777" stroke-width="1.1"/>
<path d="M201.5 1004 H210.5 M206 999.5 V1008.5" stroke="#666" stroke-width="1.3"/>
<path d="M1157.5 1000 V1001.5 M1157.5 1004 V1005.5 M1157.5 1008 V1009.5" stroke="#999" stroke-width="1.3"/>
<rect x="1172.5" y="997.5" width="15" height="14" fill="#fff" stroke="#ababab"/>
<path d="M1182 1001 V1008 L1178 1004.5Z" fill="#666"/>
<rect x="1188" y="997.5" width="672" height="14" fill="#fff" stroke="#ababab"/>
<rect x="1860" y="997.5" width="28" height="14" fill="#dcdcdc"/>
<rect x="1888" y="997.5" width="14" height="14" fill="#fff" stroke="#ababab"/>
<path d="M1893 1001 V1008 L1897 1004.5Z" fill="#666"/>

<!-- status bar -->
<text x="8" y="1032" textLength="31" lengthAdjust="spacingAndGlyphs" style="font-size:11.5px">Ready</text>
<text x="1331.4" y="1032" textLength="110" lengthAdjust="spacingAndGlyphs" style="font-size:11.5px">Average: 3166.089239</text>
<text x="1458" y="1032" textLength="44" lengthAdjust="spacingAndGlyphs" style="font-size:11.5px">Count: 6</text>
<text x="1518.6" y="1032" textLength="90.4" lengthAdjust="spacingAndGlyphs" style="font-size:11.5px">Sum: 18996.53543</text>
<rect x="1628" y="1019" width="40" height="21" fill="#c8c6c4"/>
<path d="M1641.5 1022.5 H1653.5 V1034.5 H1641.5Z M1641.5 1026.5 H1653.5 M1641.5 1030.5 H1653.5 M1645.5 1022.5 V1034.5 M1649.5 1022.5 V1034.5" fill="none" stroke="#333"/>
<path d="M1681.5 1022.5 H1695 V1034.5 H1681.5Z" fill="none" stroke="#444"/>
<path d="M1684 1025 H1692.5 V1032 H1684Z M1686 1027.5 H1691 M1686 1029.5 H1691" fill="none" stroke="#444" stroke-width=".9"/>
<path d="M1721.5 1022.5 H1735 V1034.5 H1721.5Z M1721.5 1029.5 H1735 M1725.5 1022.5 V1029.5 M1731 1022.5 V1029.5" fill="none" stroke="#444" stroke-width="1"/>
<path d="M1754.5 1028.5 H1762 M1873 1028.5 H1881 M1877 1024.5 V1032.5" stroke="#444" stroke-width="1.1"/>
<path d="M1767 1028.5 H1867" stroke="#b4b4b4"/>
<rect x="1814" y="1023" width="4.5" height="11" fill="#777"/>
<text x="1894" y="1032" textLength="21" lengthAdjust="spacingAndGlyphs" style="font-size:11.5px">96%</text>
</svg>
</body></html>
